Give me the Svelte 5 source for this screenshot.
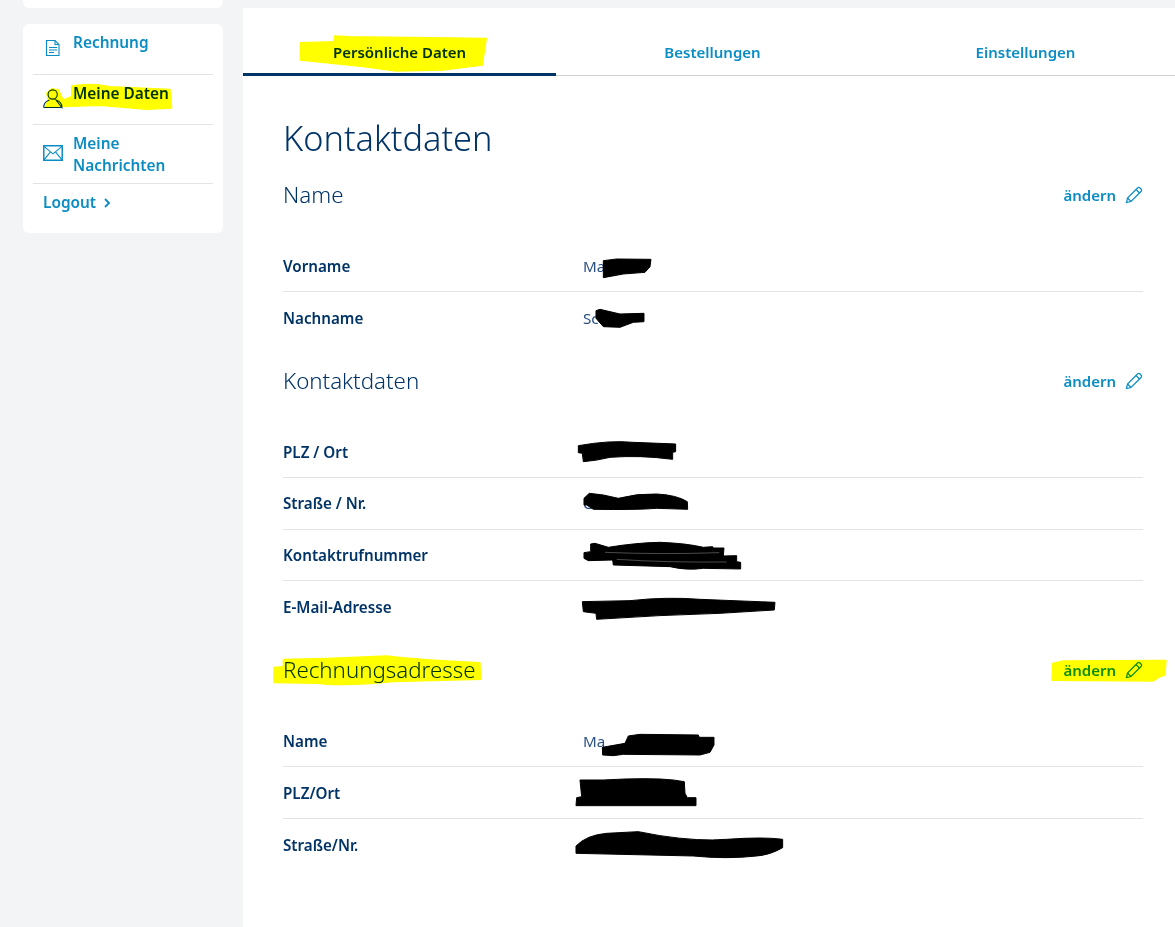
<script lang="ts">
  // Account page: side menu, tabs and the contact data sections
  const sections = [
    {
      title: 'Name',
      rows: [
        { label: 'Vorname', value: 'Ma' },
        { label: 'Nachname', value: 'Sc' }
      ]
    },
    {
      title: 'Kontaktdaten',
      rows: [
        { label: 'PLZ / Ort', value: '' },
        { label: 'Straße / Nr.', value: 'C' },
        { label: 'Kontaktrufnummer', value: '' },
        { label: 'E-Mail-Adresse', value: '' }
      ]
    },
    {
      title: 'Rechnungsadresse',
      rows: [
        { label: 'Name', value: 'Ma' },
        { label: 'PLZ/Ort', value: '' },
        { label: 'Straße/Nr.', value: '' }
      ]
    }
  ];

  const tabs = ['Persönliche Daten', 'Bestellungen', 'Einstellungen'];
</script>

<div class="page">
  <aside class="sidebar">
    <div class="card-stub"></div>
    <nav class="card">
      <a class="item" href="#rechnung">
        <span class="icon">
          <svg width="20" height="20" viewBox="0 0 20 20" fill="none" stroke="currentColor" stroke-width="1.1">
            <path d="M3.500 2.500h8.500l4 4v11h-12.500z" />
            <path d="M12 2.500v4h4M6 9.500h8M6 12h8M6 14.500h5" />
          </svg>
        </span>
        <span>Rechnung</span>
      </a>
      <a class="item active" href="#daten">
        <span class="icon">
          <svg width="20" height="20" viewBox="0 0 20 20" fill="none" stroke="currentColor" stroke-width="1.1">
            <circle cx="9.700" cy="5.500" r="4.600" />
            <path d="M.7 18.500c0-3.500 2.500-6.500 5.800-7.500M13 11c3.500 1 5.900 4 5.900 7.500zM.7 18.500h18.200" />
          </svg>
        </span>
        <span>Meine Daten</span>
      </a>
      <a class="item" href="#nachrichten">
        <span class="icon">
          <svg width="20" height="20" viewBox="0 0 20 20" fill="none" stroke="currentColor" stroke-width="1.500">
            <path d="M.8 2.800h18.400v14.400H.8z" />
            <path d="M1 3.300l9 7.500 9-7.500M1 16.800l6.500-8M19 16.800l-6.500-8" stroke-width="1.100" />
          </svg>
        </span>
        <span>Meine<br />Nachrichten</span>
      </a>
      <a class="logout" href="#logout">
        Logout
        <svg width="8" height="10" viewBox="0 0 8 10" fill="none" stroke="currentColor" stroke-width="1.800">
          <path d="M2 1l4 4-4 4" />
        </svg>
      </a>
    </nav>
  </aside>

  <main class="main">
    <div class="tabs">
      {#each tabs as tab, i}
        <button type="button" class="tab" class:selected={i === 0}>{tab}</button>
      {/each}
    </div>

    <div class="content">
      <h1>Kontaktdaten</h1>
      {#each sections as section}
        <section>
          <header class="section-head">
            <h2>{section.title}</h2>
            <a class="edit" href="#edit">
              ändern
              <svg width="18" height="18" viewBox="0 0 18 18" fill="none" stroke="currentColor" stroke-width="1.200">
                <path d="M1.500 16.500l1-4.500L12.500 2a1.800 1.800 0 0 1 2.500 0l1 1a1.800 1.800 0 0 1 0 2.500L6 15.500z" />
                <path d="M2.500 12l3.500 3.500M11 3.500l3.500 3.500" />
              </svg>
            </a>
          </header>
          {#each section.rows as row}
            <div class="row">
              <span class="label">{row.label}</span>
              <span class="value">{row.value}</span>
            </div>
          {/each}
        </section>
      {/each}
    </div>
  </main>

  <!-- marker pen and redaction strokes drawn over the page -->
  <svg class="marks marker" width="1175" height="927" aria-hidden="true">
    <g fill="#ffff00" stroke="#ffff00" stroke-width="4" stroke-linejoin="round">
      <path transform="translate(243 0) scale(.3333)" d="M172 128L272 125L275 108L320 110L730 115L718 195L600 210L460 213L360 200L172 180Z" />
      <path transform="scale(.3333)" d="M215 258Q270 248 330 260L510 268L515 324L440 328L300 316L188 320L135 322L145 300L140 280L155 266L175 270L190 300L215 290Z" />
      <path transform="translate(260 640) scale(.3333)" d="M70 58L200 55L380 48Q480 60 660 68L662 118L400 125Q250 140 170 130L42 128L42 82L70 80Z" />
      <path transform="translate(1030 645) scale(.3333)" d="M68 55L100 48L408 46L405 90L385 98L370 108L66 106Z" />
    </g>
  </svg>
  <svg class="marks" width="1175" height="927" aria-hidden="true">
    <g fill="#000" stroke="#000" stroke-width="3" stroke-linejoin="round">
      <path transform="translate(570 250) scale(.3333)" d="M100 32L140 27L243 28L240 50L225 67L160 72L100 83Z" />
      <path transform="translate(570 250) scale(.3333)" d="M78 182L90 178L150 192L222 190L222 215L190 217L150 232L100 230L78 205Z" />
      <g transform="translate(560 430) scale(.3333)">
        <path d="M55 47Q150 30 220 37L347 42L347 65L338 67L338 88Q240 75 150 82Q110 92 70 95L67 70L55 68Z" />
        <path d="M72 205L88 190L130 195L175 205Q230 190 290 192Q350 195 382 215L383 238L290 235Q230 240 100 238L80 225L72 225Z" />
        <path d="M92 342L105 340L145 352Q230 338 300 337Q380 340 430 352L458 350L460 354L492 354L490 378L530 377L530 395L542 397L542 417L430 415Q380 422 330 410L160 405L158 390L85 392L72 385L72 368L92 365Z" />
        <path d="M67 515L210 512Q320 500 420 508L645 517L643 540L480 550Q300 555 110 568L108 550L70 545Z" />
      </g>
      <g transform="translate(560 720) scale(.3333)">
        <path d="M127 82L195 70L205 48L240 43L415 45L418 52L462 52L462 75L450 97L420 105L190 103L160 107L128 105Z" />
        <path d="M60 180L130 180Q270 172 340 180L373 185L375 220L382 233L408 233L408 257L48 257L50 233L65 230Z" />
        <path d="M48 378Q80 345 140 340L235 335L300 347Q420 365 500 358Q610 350 668 358L668 383Q630 405 590 408Q500 418 400 408L48 400Z" />
      </g>
    </g>
    <g transform="translate(560 430) scale(.3333)" fill="none" stroke="#fff" stroke-width="1.500" opacity=".6">
      <path d="M135 367Q300 374 478 368M170 388Q320 398 500 396" />
    </g>
  </svg>
</div>

<style>
  :global(body) {
    background: #f3f4f6;
    overflow: hidden;
    font-family: "Noto Sans", "Open Sans", sans-serif;
    color: #003366;
  }

  .page {
    position: relative;
    display: flex;
    width: 1175px;
    height: 927px;
    overflow: hidden;
  }

  .sidebar {
    flex: 0 0 200px;
    margin: 0 20px 0 23px;
  }

  .card-stub {
    height: 8px;
    background: #fff;
    border-radius: 0 0 6px 6px;
    margin-bottom: 16px;
  }

  .card {
    background: #fff;
    border-radius: 6px;
    height: 209px;
    box-sizing: border-box;
    padding: 0 10px;
  }

  .item {
    display: flex;
    gap: 10px;
    padding: 8px 10px 6px;
    min-height: 50px;
    box-sizing: border-box;
    border-bottom: 1px solid #e2e3e6;
    color: #0b8dc4;
    font-size: 15.4px;
    font-weight: 600;
    line-height: 22px;
    text-decoration: none;
  }

  .item:first-child {
    min-height: 51px;
  }

  .item.active {
    color: #003366;
  }

  .icon {
    flex: 0 0 20px;
    align-self: center;
    display: flex;
    margin-bottom: 4px;
  }

  .logout {
    display: flex;
    align-items: center;
    gap: 7px;
    padding: 8px 10px;
    color: #0b8dc4;
    font-size: 15.4px;
    font-weight: 600;
    line-height: 22px;
    text-decoration: none;
  }

  .main {
    flex: 1 1 auto;
    min-width: 0;
    margin-top: 8px;
    background: #fff;
  }

  .tabs {
    display: flex;
    height: 68px;
    box-sizing: border-box;
    border-bottom: 1px solid #cfd1d5;
  }

  .tab {
    flex: 0 0 313px;
    height: 68px;
    padding: 22px 0 0;
    box-sizing: border-box;
    align-self: flex-start;
    display: block;
    background: none;
    border: 0;
    border-bottom: 3px solid transparent;
    color: #0b8dc4;
    font: 600 15px/22px "Noto Sans", "Open Sans", sans-serif;
    text-align: center;
  }

  .tab.selected {
    color: #003366;
    border-bottom-color: #003366;
  }

  .content {
    padding: 0 32px 0 40px;
  }

  h1 {
    margin: 0;
    height: 82px;
    padding-top: 40px;
    box-sizing: border-box;
    font-size: 34.3px;
    font-weight: 300;
    line-height: 44px;
  }

  .section-head {
    display: flex;
    justify-content: space-between;
    align-items: center;
    height: 74px;
    margin-bottom: 8.25px;
  }

  h2 {
    margin: 0;
    font-size: 22.3px;
    font-weight: 300;
    line-height: 30px;
  }

  .edit {
    display: flex;
    align-items: center;
    gap: 9px;
    color: #0b8dc4;
    font-size: 15px;
    font-weight: 600;
    text-decoration: none;
  }

  .row {
    display: flex;
    align-items: center;
    height: 51.75px;
    padding-top: .5px;
    box-sizing: border-box;
    border-bottom: 1px solid #e2e3e6;
    font-size: 15.2px;
  }

  .row:last-child {
    border-bottom: 0;
  }

  .label {
    flex: 0 0 300px;
    font-weight: 600;
  }

  .value {
    color: #2a5080;
  }

  .marks {
    position: absolute;
    top: 0;
    left: 0;
    pointer-events: none;
  }

  .marker {
    mix-blend-mode: multiply;
  }
</style>
